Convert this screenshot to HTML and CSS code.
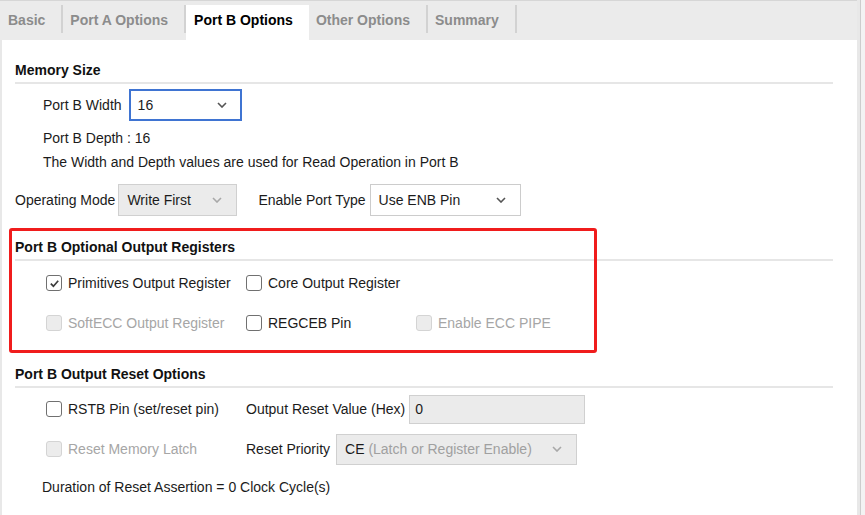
FILE: index.html
```html
<!DOCTYPE html>
<html>
<head>
<meta charset="utf-8">
<link rel="stylesheet" href="styles.css">
</head>
<body>
<div class="window">
  <div class="tabbar">
    <div class="tab first">Basic</div>
    <div class="sep"></div>
    <div class="tab">Port A Options</div>
    <div class="sep"></div>
    <div class="tab active">Port B Options</div>
    <div class="tab">Other Options</div>
    <div class="sep"></div>
    <div class="tab">Summary</div>
    <div class="sep"></div>
  </div>
  <div class="content">
    <div class="section-title mem-title">Memory Size</div>
    <div class="width-row">
      <span>Port B Width</span>
      <div class="select focus">
        <span>16</span>
        <svg class="chev" width="10" height="6" viewBox="0 0 10 6"><path d="M1 1 L5 5 L9 1" /></svg>
      </div>
    </div>
    <div class="info first-info">Port B Depth : 16</div>
    <div class="info">The Width and Depth values are used for Read Operation in Port B</div>
    <div class="op-row">
      <span>Operating Mode</span>
      <div class="select disabled op-mode">
        <span>Write First</span>
        <svg class="chev" width="10" height="6" viewBox="0 0 10 6"><path d="M1 1 L5 5 L9 1" /></svg>
      </div>
      <span class="port-type-label">Enable Port Type</span>
      <div class="select port-type">
        <span>Use ENB Pin</span>
        <svg class="chev" width="10" height="6" viewBox="0 0 10 6"><path d="M1 1 L5 5 L9 1" /></svg>
      </div>
    </div>

    <div class="section-title reg-title">Port B Optional Output Registers</div>
    <div class="check-grid">
      <div class="check">
        <span class="cb"><svg width="13" height="13" viewBox="0 0 13 13"><path d="M2.8 6.6 L5.4 9.2 L10.2 3.8" /></svg></span>
        <span>Primitives Output Register</span>
      </div>
      <div class="check">
        <span class="cb"></span>
        <span>Core Output Register</span>
      </div>
      <div></div>
      <div class="check disabled">
        <span class="cb"></span>
        <span>SoftECC Output Register</span>
      </div>
      <div class="check">
        <span class="cb"></span>
        <span>REGCEB Pin</span>
      </div>
      <div class="check disabled">
        <span class="cb"></span>
        <span>Enable ECC PIPE</span>
      </div>
    </div>

    <div class="section-title reset-title">Port B Output Reset Options</div>
    <div class="reset-grid">
      <div class="check">
        <span class="cb"></span>
        <span>RSTB Pin (set/reset pin)</span>
      </div>
      <div class="field">
        <span>Output Reset Value (Hex)</span>
        <div class="input">0</div>
      </div>
      <div class="check disabled">
        <span class="cb"></span>
        <span>Reset Memory Latch</span>
      </div>
      <div class="field priority">
        <span>Reset Priority</span>
        <div class="select disabled priority-select">
          <span><span class="val">CE</span> <span class="hint">(Latch or Register Enable)</span></span>
          <svg class="chev" width="10" height="6" viewBox="0 0 10 6"><path d="M1 1 L5 5 L9 1" /></svg>
        </div>
      </div>
    </div>
    <div class="duration">Duration of Reset Assertion = 0 Clock Cycle(s)</div>
  </div>
  <div class="annotation"></div>
</div>
</body>
</html>
```
FILE: styles.css
```css
body {
  margin: 0;
  background: #f3f3f3;
  font-family: "Liberation Sans", Arial, sans-serif;
  font-size: 14px;
  color: #1b1b1b;
}

.window {
  position: relative;
  width: 857px;
  height: 515px;
  background: #fff;
  border-right: 3px solid #e8e8e8;
  box-shadow: 1px 0 0 #cdcdcd;
  display: flex;
  flex-direction: column;
  overflow: hidden;
}

.tabbar {
  height: 39px;
  border-top: 1px solid #d6d6d6;
  background: #ebebeb;
  display: flex;
  align-items: flex-end;
  flex: none;
}

.tab {
  height: 35px;
  line-height: 31px;
  box-sizing: border-box;
  padding: 0 16px 0 7px;
  font-weight: bold;
  color: #8c8c8c;
  white-space: nowrap;
}

.tab.first {
  padding-left: 8px;
}

.tab.active {
  background: #fff;
  color: #000;
  padding-left: 8px;
}

.sep {
  width: 2px;
  height: 28px;
  background: #d2d2d2;
  align-self: flex-start;
  margin-top: 4px;
}

.content {
  flex: 1;
  border-left: 2px solid #e8e8e8;
  padding: 0 24px 0 13px;
}

.section-title {
  font-weight: bold;
  color: #111;
  line-height: 16px;
  padding-bottom: 4px;
  border-bottom: 2px solid #e6e6e6;
}

.mem-title {
  margin-top: 22px;
}

.width-row {
  margin-top: 5px;
  margin-left: 28px;
  display: flex;
  align-items: center;
  gap: 7px;
}

.select {
  box-sizing: border-box;
  height: 32px;
  border: 1px solid #cccccc;
  background: #fff;
  display: flex;
  align-items: center;
  justify-content: space-between;
  padding: 0 14px 0 8px;
  white-space: nowrap;
}

.select .chev path {
  fill: none;
  stroke: #555;
  stroke-width: 1.6;
}

.select.disabled {
  background: #ebebeb;
  border-color: #d0d0d0;
}

.select.disabled .chev path {
  stroke: #a8a8a8;
}

.select.focus {
  width: 113px;
  border: 2px solid #3f74d2;
  padding-left: 7px;
  padding-right: 13px;
}

.info {
  margin-left: 28px;
  line-height: 24px;
}

.first-info {
  margin-top: 5px;
}

.op-row {
  margin-top: 10px;
  display: flex;
  align-items: center;
}

.op-mode {
  width: 119px;
  margin-left: 3px;
}

.port-type-label {
  margin-left: 21px;
}

.port-type {
  width: 151px;
  margin-left: 4px;
}

.reg-title {
  margin-top: 23px;
}

.check-grid {
  margin-top: 2px;
  margin-left: 31px;
  display: grid;
  grid-template-columns: 200px 170px auto;
  grid-auto-rows: 40px;
  align-items: center;
}

.check {
  display: flex;
  align-items: center;
  gap: 6px;
  white-space: nowrap;
}

.cb {
  width: 16px;
  height: 16px;
  box-sizing: border-box;
  border: 1.5px solid #707070;
  border-radius: 3px;
  background: #fff;
  display: flex;
  align-items: center;
  justify-content: center;
}

.cb path {
  fill: none;
  stroke: #3c3c3c;
  stroke-width: 1.7;
}

.check.disabled .cb {
  border-color: #d4d4d4;
  background: #ececec;
}

.check.disabled {
  color: #a6a6a6;
}

.reset-title {
  margin-top: 23px;
}

.reset-grid {
  margin-top: 1px;
  margin-left: 31px;
  display: grid;
  grid-template-columns: 200px auto;
  grid-auto-rows: 40px;
  align-items: center;
}

.field {
  display: flex;
  align-items: center;
  gap: 4px;
  white-space: nowrap;
}

.field.priority {
  gap: 6px;
}

.input {
  box-sizing: border-box;
  width: 176px;
  height: 29px;
  line-height: 27px;
  border: 1px solid #d0d0d0;
  background: #ebebeb;
  padding-left: 5px;
}

.priority-select {
  width: 241px;
  height: 31px;
}

.priority-select .hint {
  color: #a0a0a0;
}

.duration {
  margin-top: 6px;
  margin-left: 27px;
  line-height: 24px;
}

.annotation {
  position: absolute;
  left: 9px;
  top: 228px;
  width: 588px;
  height: 125px;
  box-sizing: border-box;
  border: 3px solid #f01c1c;
  border-radius: 3px;
  pointer-events: none;
}
```
